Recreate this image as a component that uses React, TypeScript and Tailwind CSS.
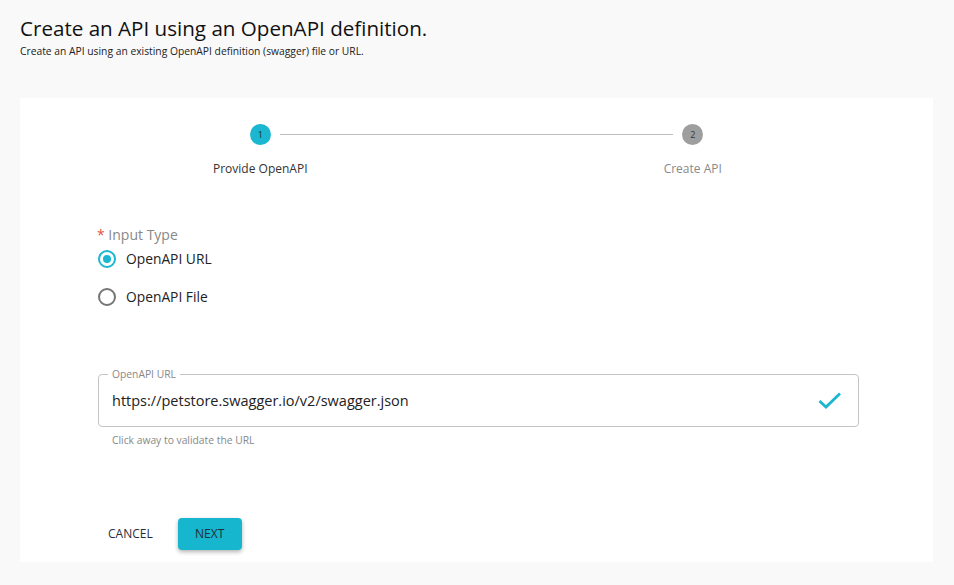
import React, { useState } from 'react';

const steps = ['Provide OpenAPI', 'Create API'];

const Stepper: React.FC<{ active: number }> = ({ active }) => (
  <div className="flex px-[24px] pt-[26px]">
    {steps.map((label, i) => (
      <div key={label} className="relative flex flex-1 flex-col items-center">
        {i > 0 && (
          <div className="absolute left-[calc(-50%+20px)] right-[calc(50%+20px)] top-[10px] border-t border-[#bdbdbd]" />
        )}
        <div
          className={
            i === active
              ? 'flex h-[21px] w-[21px] items-center justify-center rounded-full bg-[#1bb6cf] text-[9px] text-[#1d2b36]'
              : 'flex h-[21px] w-[21px] items-center justify-center rounded-full bg-[#9e9e9e] text-[9px] text-[#2d3a4a]'
          }
        >
          {i + 1}
        </div>
        <div
          className={
            i === active
              ? 'mt-[16px] text-[12px] leading-[16px] text-[#333]'
              : 'mt-[16px] text-[12px] leading-[16px] text-[#888]'
          }
        >
          {label}
        </div>
      </div>
    ))}
  </div>
);

const Radio: React.FC<{ checked: boolean; label: string; onClick: () => void }> = ({ checked, label, onClick }) => (
  <label onClick={onClick} className="flex h-[38px] cursor-pointer items-center">
    <span
      className={
        checked
          ? 'flex h-[18px] w-[18px] items-center justify-center rounded-full border-2 border-[#1bb6cf]'
          : 'flex h-[18px] w-[18px] items-center justify-center rounded-full border-2 border-[#757575]'
      }
    >
      {checked && <span className="h-[8px] w-[8px] rounded-full bg-[#1bb6cf]" />}
    </span>
    <span className="ml-[10px] text-[13.8px] text-[#222]">{label}</span>
  </label>
);

export default function App() {
  const [type, setType] = useState<'url' | 'file'>('url');
  const [url, setUrl] = useState('https://petstore.swagger.io/v2/swagger.json');

  return (
    <div className="min-h-screen bg-[#f9f9f9] pl-[20px] pr-[21px] pb-[23px] font-['Open_Sans',sans-serif]">
      <div className="pt-[13px]">
        <h1 className="text-[20.6px] leading-[30px] text-[#111]">Create an API using an OpenAPI definition.</h1>
        <p className="text-[10.3px] leading-[16px] text-[#222]">
          Create an API using an existing OpenAPI definition (swagger) file or URL.
        </p>
      </div>

      <div className="mt-[39px] h-[464px] bg-white">
        <Stepper active={0} />

        <div className="pl-[77px] pr-[74px] pt-[48px]">
          <div className="text-[14px] leading-[20px] text-[#888]">
            <span className="text-[#e0533d]">*</span> Input Type
          </div>
          <div className="mt-[-5px] pl-[1px]">
            <Radio checked={type === 'url'} label="OpenAPI URL" onClick={() => setType('url')} />
            <Radio checked={type === 'file'} label="OpenAPI File" onClick={() => setType('file')} />
          </div>

          <div className="relative ml-[1px] mt-[58px] flex h-[53px] items-center rounded-[4px] border border-[#c4c4c4] pl-[13px] pr-[16px]">
            <span className="absolute left-[9px] top-[-8px] bg-white px-[4px] text-[10.3px] leading-[14px] text-[#888]">
              OpenAPI URL
            </span>
            <input
              value={url}
              onChange={(e) => setUrl(e.target.value)}
              className="flex-1 bg-transparent text-[14.5px] text-[#222] outline-none"
            />
            <svg width="24" height="18" viewBox="0 0 24 18" className="ml-2">
              <polyline points="1.5,9 8,15 22,1.5" fill="none" stroke="#1bb6cf" strokeWidth="2.8" />
            </svg>
          </div>
          <p className="ml-[15px] mt-[6px] text-[10.3px] leading-[14px] text-[#888]">Click away to validate the URL</p>

          <div className="mt-[71px] flex items-center gap-[16px]">
            <button className="h-[32px] rounded-[4px] pl-[11px] pr-[9px] text-[12px] text-[#1f2d3d]">CANCEL</button>
            <button className="h-[32px] w-[64px] rounded-[4px] bg-[#16b6ce] text-[12px] text-[#1f2d3d] shadow-[0_2px_4px_rgba(0,0,0,0.3)]">
              NEXT
            </button>
          </div>
        </div>
      </div>
    </div>
  );
}
